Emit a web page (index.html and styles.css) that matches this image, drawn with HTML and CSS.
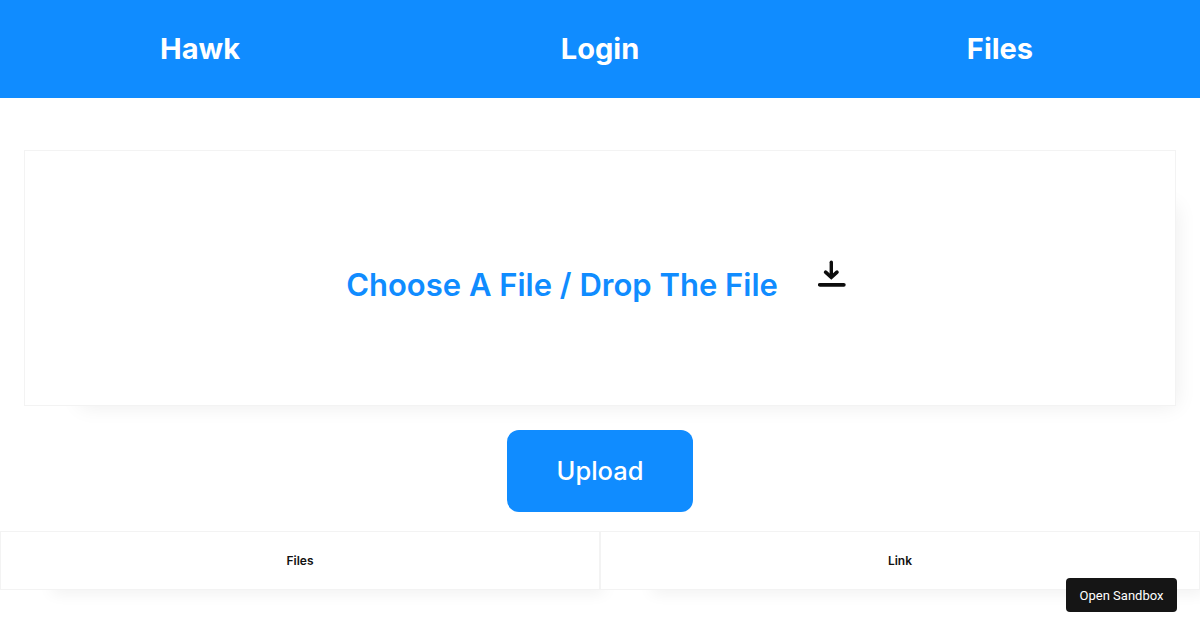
FILE: index.html
```html
<!DOCTYPE html>
<html lang="en">
<head>
<meta charset="utf-8">
<title>Hawk</title>
<link rel="stylesheet" href="styles.css">
</head>
<body>
<header class="nav">
  <a class="nav-item">Hawk</a>
  <a class="nav-item">Login</a>
  <a class="nav-item">Files</a>
</header>
<main class="main">
  <label class="drop">
    <span class="drop-text">Choose A File / Drop The File</span>
    <svg class="drop-icon" viewBox="0 0 28 28" aria-hidden="true">
      <path d="M13.300 2.200v14" fill="none" stroke="#0d0d0d" stroke-width="3.400" stroke-linecap="round"/>
      <path d="M7.600 12.200 13.300 17.400 19 12.200" fill="none" stroke="#0d0d0d" stroke-width="3.600" stroke-linecap="round"/>
      <path d="M1.800 24.800h24" fill="none" stroke="#0d0d0d" stroke-width="3.800" stroke-linecap="round"/>
    </svg>
  </label>
  <button class="upload">Upload</button>
</main>
<section class="tabs">
  <div class="tab">Files</div>
  <div class="tab">Link</div>
</section>
<a class="sandbox">Open Sandbox</a>
</body>
</html>
```
FILE: styles.css
```css
* { box-sizing: border-box; }
html, body { margin: 0; height: 100%; }
body {
  background: #fff;
  font-family: "Inter", "Liberation Sans", sans-serif;
  overflow: hidden;
}
.nav {
  display: grid;
  grid-template-columns: repeat(3, 1fr);
  align-items: center;
  height: 98px;
  padding-bottom: 2px;
  background: #108cff;
}
.nav-item {
  text-align: center;
  color: #fff;
  font-size: 29px;
  font-weight: 700;
}
.main {
  display: flex;
  flex-direction: column;
  align-items: center;
  padding: 52px 24px 0;
}
.drop {
  display: flex;
  align-items: center;
  justify-content: center;
  width: 100%;
  height: 256px;
  padding: 12px 8px 0 0;
  background: #fff;
  border: 1px solid #f3f3f3;
  box-shadow: 28px 28px 20px -28px rgba(0, 0, 0, 0.08);
}
.drop-text {
  color: #108cff;
  font-size: 31px;
  font-weight: 600;
}
.drop-icon {
  width: 28px;
  height: 28px;
  margin: -20px 0 0 40px;
}
.upload {
  width: 186px;
  height: 82px;
  margin-top: 24px;
  padding-bottom: 2px;
  border: 0;
  border-radius: 12px;
  background: #108cff;
  color: #fff;
  font-family: inherit;
  font-size: 25.500px;
  font-weight: 500;
}
.tabs {
  display: grid;
  grid-template-columns: 1fr 1fr;
  margin-top: 19px;
}
.tab {
  display: flex;
  align-items: center;
  justify-content: center;
  height: 59px;
  background: #fff;
  border: 1px solid #f3f3f3;
  box-shadow: 28px 26px 16px -24px rgba(0, 0, 0, 0.08);
  color: #111;
  font-size: 12px;
  font-weight: 600;
}
.sandbox {
  position: fixed;
  right: 23px;
  bottom: 18px;
  display: flex;
  align-items: center;
  justify-content: center;
  width: 111px;
  height: 34px;
  border-radius: 4px;
  background: #151515;
  color: #fff;
  font-family: "Roboto", sans-serif;
  font-size: 13px;
}
```
